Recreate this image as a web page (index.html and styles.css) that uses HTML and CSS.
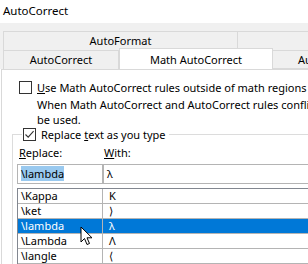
FILE: index.html
```html
<!DOCTYPE html>
<html lang="en">
<head>
    <meta charset="UTF-8">
    <title>AutoCorrect</title>
    <link rel="stylesheet" href="styles.css">
</head>
<body>
    <div class="title">AutoCorrect</div>

    <div class="tabs">
        <div class="tab-row top-row">
            <div class="tab tab-format">AutoFormat</div>
            <div class="tab tab-blank"></div>
        </div>
        <div class="tab-row">
            <div class="tab tab-auto">AutoCorrect</div>
            <div class="tab tab-math">Math AutoCorrect</div>
            <div class="tab tab-more">AutoCorrect</div>
        </div>
    </div>

    <div class="panel">
        <div class="check-row">
            <span class="box"></span>
            <span><u>U</u>se Math AutoCorrect rules outside of math regions</span>
        </div>
        <p class="note">When Math AutoCorrect and AutoCorrect rules conflict, Math AutoCorrect rules will<br>be used.</p>

        <fieldset class="group">
            <legend class="check-row">
                <span class="box">
                    <svg width="11" height="11" viewBox="0 0 11 11"><path d="M1.5 5.5 L4.2 8.2 L9.6 2.2" fill="none" stroke="#333" stroke-width="1.1"/></svg>
                </span>
                <span>Replace <u>t</u>ext as you type</span>
            </legend>

            <div class="labels">
                <span class="lbl-replace"><u>R</u>eplace:</span>
                <span><u>W</u>ith:</span>
            </div>
            <div class="inputs">
                <div class="field field-replace"><span class="sel">\lambda</span></div>
                <div class="field field-with">λ</div>
            </div>

            <div class="list">
                <div class="row"><span class="c1">\Kappa</span><span class="c2">Κ</span></div>
                <div class="row"><span class="c1">\ket</span><span class="c2">⟩</span></div>
                <div class="row active"><span class="c1">\lambda</span><span class="c2">λ</span></div>
                <div class="row"><span class="c1">\Lambda</span><span class="c2">Λ</span></div>
                <div class="row"><span class="c1">\langle</span><span class="c2">⟨</span></div>
            </div>
        </fieldset>

        <!-- mouse pointer -->
        <svg class="pointer" width="14" height="21" viewBox="0 0 14 21">
            <path d="M1 1 L1 16 L4.5 12.5 L7 18.5 L9.5 17.5 L7 11.8 L12 11.8 Z" fill="#fff" stroke="#000" stroke-width="1" stroke-linejoin="round"/>
        </svg>
    </div>
</body>
</html>
```

FILE: styles.css
```css
body {
    margin: 0;
    width: 308px;
    height: 264px;
    overflow: hidden;
    font-family: "Noto Sans", sans-serif;
    font-size: 11px;
    color: #000;
    background-color: #fff;
}

.title {
    height: 23px;
    line-height: 22px;
    padding-left: 3px;
    font-size: 11.5px;
    background-color: #fff;
}

.tabs {
    background-color: #f0f0f0;
    padding-top: 8px;
}

.tab-row {
    display: flex;
    margin-left: 3px;
    height: 19px;
}

.tab {
    box-sizing: border-box;
    border: 1px solid #d9d9d9;
    border-bottom: none;
    text-align: center;
    line-height: 18px;
    white-space: nowrap;
    overflow: hidden;
}

.tab + .tab {
    border-left: none;
}

.tab-format {
    width: 235px;
}

.tab-blank {
    flex: 1;
    border-right: none;
}

.tab-auto {
    width: 116px;
}

.tab-math {
    width: 154px;
    height: 21px;
    margin-top: -2px;
    background-color: #fff;
    border-left: 1px solid #d9d9d9 !important;
    position: relative;
    z-index: 1;
    line-height: 21px;
}

.tab-more {
    flex: 1;
    border-right: none;
    border-bottom: 1px solid #d9d9d9;
    text-align: left;
    padding-left: 25px;
}

.panel {
    position: relative;
    height: 196px;
    margin-left: 1px;
    border-left: 1px solid #d9d9d9;
    border-top: 1px solid #d9d9d9;
    background-color: #fff;
    box-sizing: border-box;
}

.check-row {
    display: flex;
    align-items: center;
    gap: 5px;
    white-space: nowrap;
}

.panel > .check-row {
    margin: 10px 0 0 17px;
    height: 14px;
}

.box {
    box-sizing: border-box;
    width: 13px;
    height: 13px;
    border: 1px solid #333;
    background-color: #fff;
    display: flex;
    align-items: center;
    justify-content: center;
    flex: none;
}

.note {
    margin: 3px 0 0 35px;
    line-height: 15px;
    white-space: nowrap;
}

.group {
    margin: 0 0 0 10px;
    padding: 0 0 0 4px;
    border: none;
    border-top: 1px solid #dcdcdc;
    border-left: 1px solid #dcdcdc;
    min-width: 0;
}

.group legend {
    padding: 0 3px 0 1px;
    margin-left: 5px;
    height: 14px;
}

.labels {
    display: flex;
    margin-top: 4px;
    height: 17px;
    line-height: 16px;
    padding-left: 2px;
}

.lbl-replace {
    width: 85px;
}

.inputs {
    display: flex;
    margin-top: 2px;
    height: 20px;
}

.field {
    box-sizing: border-box;
    height: 20px;
    border: 1px solid #b4b4b4;
    line-height: 17px;
    padding-left: 3px;
    white-space: nowrap;
}

.field-replace {
    width: 86px;
}

.field-with {
    flex: 1;
    border-right: none;
    padding-left: 3px;
}

.sel {
    background-color: #99c9ef;
}

.list {
    margin-top: 4px;
    border-top: 1px solid #828790;
    border-left: 1px solid #828790;
}

.row {
    display: flex;
    height: 14px;
    border-bottom: 1px solid #b4b4b4;
    line-height: 14px;
}

.c1 {
    width: 81px;
    padding-left: 3px;
    border-right: 1px solid #b4b4b4;
}

.c2 {
    padding-left: 6px;
}

.row.active {
    background-color: #0078d7;
    color: #fff;
}

.pointer {
    position: absolute;
    left: 78px;
    top: 156px;
}
```
